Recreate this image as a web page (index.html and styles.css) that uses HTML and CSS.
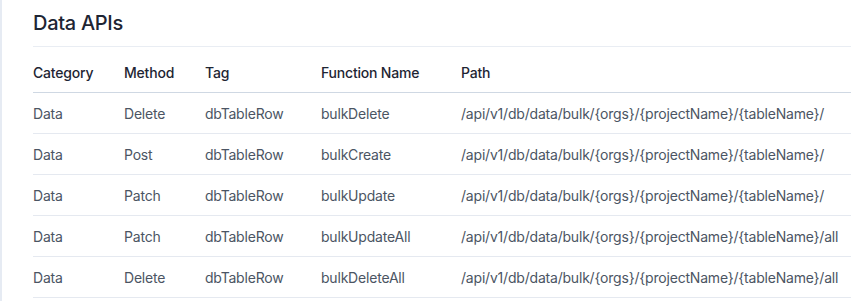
FILE: index.html
```html
<!DOCTYPE html>
<html lang="en">
<head>
    <meta charset="UTF-8">
    <title>Data APIs</title>
    <link rel="stylesheet" href="styles.css">
</head>
<body>
    <div class="content">
        <h2 class="title">Data APIs</h2>
        <table class="api-table">
            <thead>
                <tr>
                    <th class="col-cat">Category</th>
                    <th class="col-method">Method</th>
                    <th class="col-tag">Tag</th>
                    <th class="col-fn">Function Name</th>
                    <th>Path</th>
                </tr>
            </thead>
            <tbody>
                <tr><td>Data</td><td>Delete</td><td>dbTableRow</td><td>bulkDelete</td><td>/api/v1/db/data/bulk/{orgs}/{projectName}/{tableName}/</td></tr>
                <tr><td>Data</td><td>Post</td><td>dbTableRow</td><td>bulkCreate</td><td>/api/v1/db/data/bulk/{orgs}/{projectName}/{tableName}/</td></tr>
                <tr><td>Data</td><td>Patch</td><td>dbTableRow</td><td>bulkUpdate</td><td>/api/v1/db/data/bulk/{orgs}/{projectName}/{tableName}/</td></tr>
                <tr><td>Data</td><td>Patch</td><td>dbTableRow</td><td>bulkUpdateAll</td><td>/api/v1/db/data/bulk/{orgs}/{projectName}/{tableName}/all</td></tr>
                <tr><td>Data</td><td>Delete</td><td>dbTableRow</td><td>bulkDeleteAll</td><td>/api/v1/db/data/bulk/{orgs}/{projectName}/{tableName}/all</td></tr>
            </tbody>
        </table>
    </div>
</body>
</html>
```

FILE: styles.css
```css
body {
    margin: 0;
    background: #fff;
    font-family: 'Inter', sans-serif;
    color: #4b5563;
}

.content {
    border-left: 2px solid #e6ebf3;
    padding-left: 31px;
    min-height: 301px;
}

.title {
    margin: 0;
    padding-top: 11px;
    height: 35px;
    font-size: 20px;
    font-weight: 500;
    color: #1e2533;
    border-bottom: 1px solid #e9edf3;
    letter-spacing: -0.3px;
}

.api-table {
    width: 100%;
    border-collapse: collapse;
    font-size: 14px;
    letter-spacing: -0.2px;
}

.api-table th {
    text-align: left;
    font-weight: 500;
    color: #1e2533;
    height: 39px;
    padding: 6px 0 0;
    border-bottom: 1px solid #cfd8e3;
}

.api-table td {
    height: 40px;
    padding: 0;
    border-bottom: 1px solid #e5e9f0;
}

.col-cat { width: 91px; }
.col-method { width: 81px; }
.col-tag { width: 116px; }
.col-fn { width: 140px; }
```
